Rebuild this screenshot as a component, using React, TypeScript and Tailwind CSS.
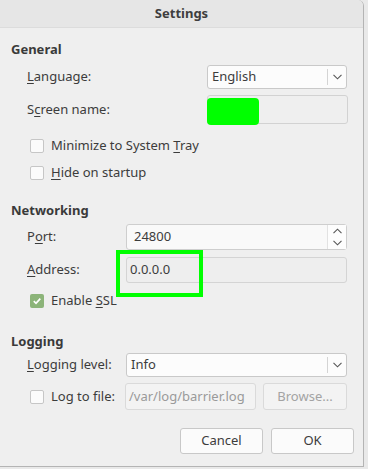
const Chevron = ({ up = false }: { up?: boolean }) => (
  <svg width="9" height="6" viewBox="0 0 9 6" className={up ? "rotate-180" : ""}>
    <path d="M0.5 0.8 L4.5 4.8 L8.5 0.8" fill="none" stroke="#555" strokeWidth="1.1" />
  </svg>
);

const Checkbox = ({ checked = false }: { checked?: boolean }) =>
  checked ? (
    <span className="flex h-[14px] w-[14px] items-center justify-center rounded-[2px] bg-[#8cb479]">
      <svg width="10" height="10" viewBox="0 0 10 10">
        <path d="M1.8 5.2 L4 7.3 L8.3 2.6" fill="none" stroke="#fff" strokeWidth="1.7" />
      </svg>
    </span>
  ) : (
    <span className="h-[14px] w-[14px] rounded-[2px] border border-[#c6c6c6] bg-[#fbfbfb]" />
  );

const Combo = ({ value, className }: { value: string; className: string }) => (
  <div
    className={`flex h-[24px] items-center rounded-[3px] border border-[#c9c9c9] bg-[#fcfcfc] ${className}`}
  >
    <span className="flex-1 pl-[4px]">{value}</span>
    <span className="h-[16px] w-px bg-[#d4d4d4]" />
    <span className="flex w-[18px] justify-center">
      <Chevron />
    </span>
  </div>
);

const Header = ({ children }: { children: React.ReactNode }) => (
  <div className="pl-[11px] text-[13px] font-bold leading-[16px] text-[#3a3a3a]">{children}</div>
);

export default function App() {
  return (
    <div className="flex h-[469px] w-[368px] bg-[#e9e9e9] font-['Noto_Sans','DejaVu_Sans',sans-serif] text-[13px] text-[#3c3c3c]">
      <div className="relative flex h-[467px] w-[364px] flex-col rounded-tr-[6px] border-r border-b border-[#b4b4b4] bg-[#efefef]">
        <div className="flex h-[28px] items-center justify-center rounded-tr-[6px] border-b border-[#dcdcdc] bg-[#e6e6e6] text-[13px] font-bold text-[#3e3e3e]">
          Settings
        </div>

        <div className="mt-[13px]">
          <Header>General</Header>
        </div>

        <div className="mt-[8px] flex items-center pl-[27px]">
          <span className="w-[180px]">
            <u className="underline-offset-2">L</u>anguage:
          </span>
          <Combo value="English" className="w-[140px]" />
        </div>

        <div className="mt-[6px] flex items-center pl-[27px]">
          <span className="w-[180px]">
            S<u className="underline-offset-2">c</u>reen name:
          </span>
          <div className="relative h-[29px] w-[141px] rounded-[3px] border border-[#d2d2d2] bg-[#efefef]">
            <div className="absolute top-[2px] left-[-1px] h-[27px] w-[52px] rounded-[4px] bg-[#00ff00]" />
          </div>
        </div>

        <div className="mt-[12px] flex h-[20px] items-center gap-[7px] pl-[30px]">
          <Checkbox />
          <span>
            Minimize to System <u className="underline-offset-2">T</u>ray
          </span>
        </div>
        <div className="mt-[7px] flex h-[20px] items-center gap-[7px] pl-[30px]">
          <Checkbox />
          <span>
            <u className="underline-offset-2">H</u>ide on startup
          </span>
        </div>

        <div className="mt-[19px]">
          <Header>Networking</Header>
        </div>

        <div className="mt-[6px] flex items-center pl-[27px]">
          <span className="w-[99px]">
            P<u className="underline-offset-2">o</u>rt:
          </span>
          <div className="flex h-[26px] w-[221px] items-center rounded-[3px] border border-[#cecece] bg-[#f9f9f9]">
            <span className="flex-1 pl-[7px]">24800</span>
            <span className="flex h-full w-[19px] flex-col items-center justify-center gap-[6px] border-l border-[#e2e2e2] bg-[#fdfdfd]">
              <Chevron up />
              <Chevron />
            </span>
          </div>
        </div>

        <div className="mt-[7px] flex items-center pl-[27px]">
          <span className="w-[99px]">
            <u className="underline-offset-2">A</u>ddress:
          </span>
          <div className="flex h-[26px] w-[221px] items-center rounded-[3px] border border-[#d4d4d4] bg-[#eeeeee] pl-[3px]">
            0.0.0.0
          </div>
        </div>

        <div className="mt-[8px] flex h-[20px] items-center gap-[7px] pl-[30px]">
          <Checkbox checked />
          <span>
            Enable <u className="underline-offset-2">S</u>SL
          </span>
        </div>

        <div className="mt-[22px]">
          <Header>Logging</Header>
        </div>

        <div className="mt-[4px] flex items-center pl-[27px]">
          <span className="w-[99px]">
            <u className="underline-offset-2">L</u>ogging level:
          </span>
          <Combo value="Info" className="w-[221px]" />
        </div>

        <div className="mt-[6px] flex items-center pl-[30px]">
          <Checkbox />
          <span className="ml-[7px] w-[74px]">Log to file:</span>
          <div className="flex h-[27px] w-[131px] items-center rounded-[3px] border border-[#dadada] bg-[#f3f3f3] pl-[3px] text-[#9a9a9a]">
            /var/log/barrier.log
          </div>
          <div className="ml-[7px] flex h-[27px] w-[84px] items-center justify-center rounded-[3px] border border-[#dadada] bg-[#f3f3f3] text-[#a3a3a3]">
            Browse...
          </div>
        </div>

        <div className="mt-[18px] flex justify-end gap-[8px] pr-[9px]">
          <button className="h-[26px] w-[83px] rounded-[3px] border border-[#c8c8c8] bg-[#fbfbfb] text-[#3c3c3c]">
            Cancel
          </button>
          <button className="h-[26px] w-[83px] rounded-[3px] border border-[#c8c8c8] bg-[#fbfbfb] text-[#3c3c3c]">
            OK
          </button>
        </div>

        <div className="pointer-events-none absolute top-[250px] left-[116px] h-[47px] w-[87px] border-4 border-[#00ff00]" />
      </div>
    </div>
  );
}
